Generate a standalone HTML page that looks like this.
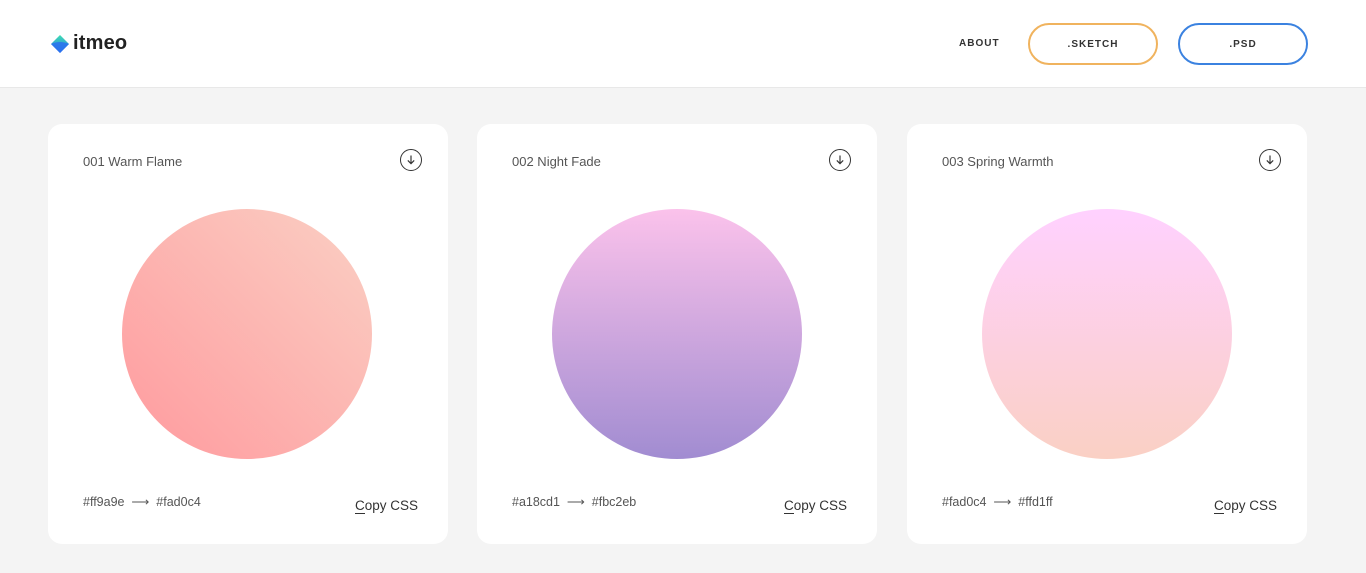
<!DOCTYPE html>
<html><head><meta charset="utf-8"><style>
*{margin:0;padding:0;box-sizing:border-box}
body{width:1366px;height:573px;background:#f4f4f4;font-family:"Liberation Sans",sans-serif;overflow:hidden;position:relative}
.hdr{position:absolute;left:0;top:0;width:1366px;height:88px;background:#fff;border-bottom:1px solid #e8e8e8}
.logo{position:absolute;left:50px;top:32px;display:flex;align-items:center}
.logo span{font-weight:bold;font-size:20px;color:#222;margin-left:3px;letter-spacing:0.2px}
.about{position:absolute;left:959px;top:38px;font-size:10px;font-weight:bold;letter-spacing:1px;color:#333}
.btn{position:absolute;top:23px;width:130px;height:42px;border-radius:21px;border:2px solid;text-align:center;line-height:40px;font-size:10px;font-weight:bold;letter-spacing:1px;color:#333}
.card{position:absolute;top:124px;width:400px;height:420px;background:#fff;border-radius:14px}
.t{position:absolute;left:35px;top:30px;font-size:13px;color:#555}
.dl{position:absolute;right:26px;top:25px;width:22px;height:22px;border:1.3px solid #333;border-radius:50%}
.c{position:absolute;left:74px;top:85px;width:250px;height:250px;border-radius:50%}
.hx{position:absolute;left:35px;top:370px;font-size:12.5px;color:#555}
.cp{position:absolute;right:30px;top:374px;font-size:13.5px;color:#333}
.cp u{text-decoration:none;border-bottom:1.5px solid #333}
</style></head><body>
<div class="hdr">
<div class="logo"><svg width="20" height="20" viewBox="0 0 20 20"><defs><linearGradient id="g" x1="0" y1="0" x2="0" y2="1"><stop offset="0" stop-color="#3ee0b0"/><stop offset="1" stop-color="#2a6ff0"/></linearGradient></defs><path d="M10 1L19 10L10 19L1 10Z" fill="url(#g)"/><path d="M1 10Q10 6 19 10L10 19Z" fill="#2a6ff0" opacity=".8"/></svg><span>itmeo</span></div>
<div class="about">ABOUT</div>
<div class="btn" style="left:1028px;border-color:#f0b35e">.SKETCH</div>
<div class="btn" style="left:1178px;border-color:#3b82e0">.PSD</div>
</div>
<div class="card" style="left:48px"><div class="t">001 Warm Flame</div><svg class="dl" viewBox="0 0 22 22"><path d="M11 6v9M7.5 11.5L11 15l3.5-3.5" fill="none" stroke="#333" stroke-width="1.3"/></svg><div class="c" style="background:linear-gradient(45deg,#ff9a9e 0%,#ff9a9e 1%,#fad0c4 100%)"></div><div class="hx">#ff9a9e &nbsp;⟶&nbsp; #fad0c4</div><div class="cp"><u>C</u>opy CSS</div></div>
<div class="card" style="left:477px"><div class="t">002 Night Fade</div><svg class="dl" viewBox="0 0 22 22"><path d="M11 6v9M7.5 11.5L11 15l3.5-3.5" fill="none" stroke="#333" stroke-width="1.3"/></svg><div class="c" style="left:75px;background:linear-gradient(to top,#a18cd1,#fbc2eb)"></div><div class="hx">#a18cd1 &nbsp;⟶&nbsp; #fbc2eb</div><div class="cp"><u>C</u>opy CSS</div></div>
<div class="card" style="left:907px"><div class="t">003 Spring Warmth</div><svg class="dl" viewBox="0 0 22 22"><path d="M11 6v9M7.5 11.5L11 15l3.5-3.5" fill="none" stroke="#333" stroke-width="1.3"/></svg><div class="c" style="left:75px;background:linear-gradient(to top,#fad0c4,#ffd1ff)"></div><div class="hx">#fad0c4 &nbsp;⟶&nbsp; #ffd1ff</div><div class="cp"><u>C</u>opy CSS</div></div>
</body></html>
